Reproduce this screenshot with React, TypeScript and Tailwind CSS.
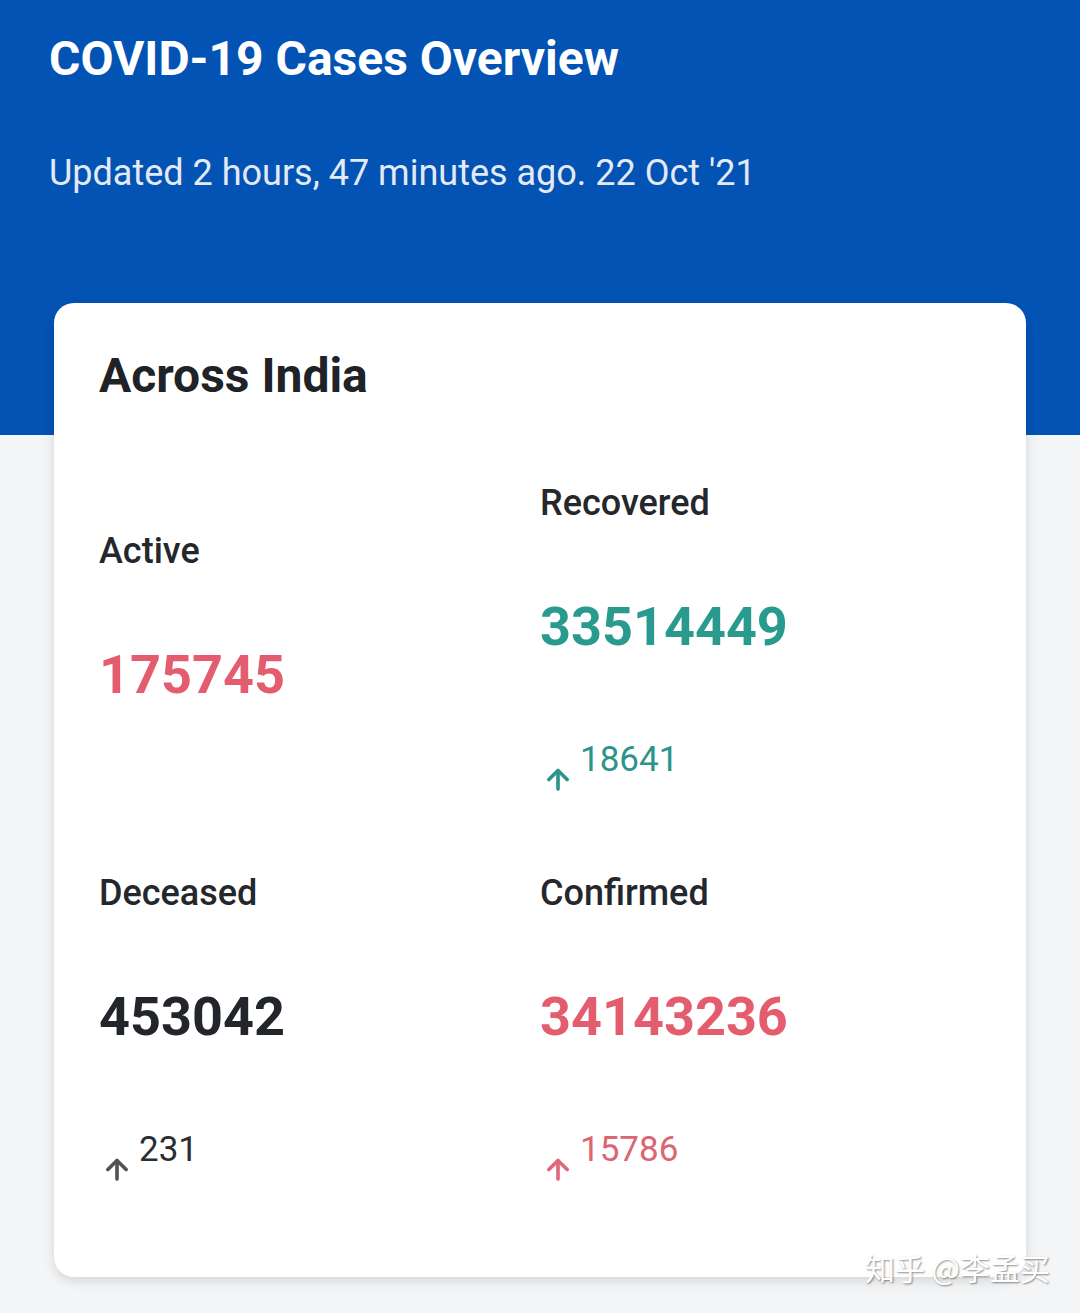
import React from "react";

type Stat = {
  label: string;
  value: string;
  valueColor: string;
  delta?: { value: string; color: string; arrow: string };
  offset?: boolean;
};

const stats: Stat[] = [
  { label: "Active", value: "175745", valueColor: "text-[#e35d6e]", offset: true },
  {
    label: "Recovered",
    value: "33514449",
    valueColor: "text-[#2a9a8e]",
    delta: { value: "18641", color: "text-[#2b948b]", arrow: "text-[#2b948b]" },
  },
  {
    label: "Deceased",
    value: "453042",
    valueColor: "text-[#22252a]",
    delta: { value: "231", color: "text-[#2b2d31]", arrow: "text-[#505255]" },
  },
  {
    label: "Confirmed",
    value: "34143236",
    valueColor: "text-[#e35d6e]",
    delta: { value: "15786", color: "text-[#dc6473]", arrow: "text-[#e0687a]" },
  },
];

function ArrowUp({ className }: { className: string }) {
  return (
    <svg
      viewBox="0 0 24 24"
      className={`block h-[23px] w-[24px] ${className}`}
      fill="none"
      stroke="currentColor"
      strokeWidth="3.8"
      strokeLinecap="round"
      strokeLinejoin="round"
    >
      <path d="M12 22V3" />
      <path d="M2.5 12L12 2.6L21.5 12" />
    </svg>
  );
}

function StatCell({ stat }: { stat: Stat }) {
  return (
    <div className={`flex flex-col ${stat.offset ? "mt-[48px]" : ""}`}>
      <div className="text-[36px] leading-[42px] font-medium text-[#24272c]">{stat.label}</div>
      <div className={`mt-[71px] text-[54px] leading-[64px] font-bold ${stat.valueColor}`}>
        {stat.value}
      </div>
      {stat.delta && (
        <div className="mt-[83px] flex items-end">
          <span className="ml-[6px]">
            <ArrowUp className={stat.delta.arrow} />
          </span>
          <span className={`ml-[10px] mb-[14px] text-[35px] leading-[35px] ${stat.delta.color}`}>
            {stat.delta.value}
          </span>
        </div>
      )}
    </div>
  );
}

export default function App() {
  return (
    <main className="relative min-h-[1313px] w-full bg-[#f4f5f7] font-['Roboto','Noto_Sans',sans-serif]">
      {/* Header */}
      <header className="h-[435px] bg-[#0353b5] px-[49px] pt-[31px]">
        <h1 className="text-[48px] leading-[56px] font-bold text-white">COVID-19 Cases Overview</h1>
        <p className="mt-[64px] text-[36px] leading-[44px] text-[#e3eaf5]">
          Updated 2 hours, 47 minutes ago. 22 Oct &apos;21
        </p>
      </header>

      {/* Card */}
      <section className="mx-[54px] -mt-[132px] relative rounded-[20px] bg-white pl-[45px] pr-[45px] pt-[45px] pb-[96px] shadow-[0_4px_12px_rgba(0,0,0,0.13)]">
        <h2 className="text-[48px] leading-[56px] font-bold text-[#1f2227]">Across India</h2>
        <div className="mt-[78px] grid grid-cols-2 items-start gap-y-[81px]">
          {stats.map((s) => (
            <StatCell key={s.label} stat={s} />
          ))}
        </div>
      </section>

      {/* watermark */}
      <div className="absolute right-[30px] bottom-[28px] text-[30px] leading-[36px] text-white font-['Noto_Sans_CJK_SC',sans-serif] [text-shadow:1px_1px_2px_rgba(0,0,0,0.45)]">
        知乎 @李孟买
      </div>
    </main>
  );
}
